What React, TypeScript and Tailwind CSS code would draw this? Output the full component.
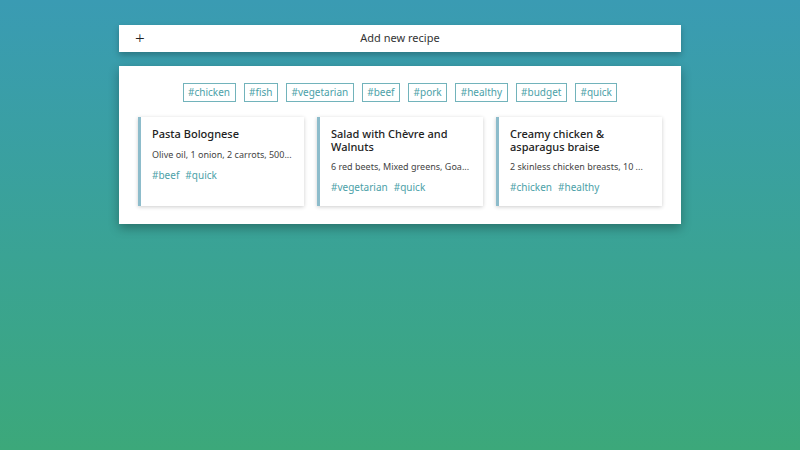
import React from 'react';

const filters = ['chicken', 'fish', 'vegetarian', 'beef', 'pork', 'healthy', 'budget', 'quick'];

const recipes = [
  { title: 'Pasta Bolognese', ingredients: 'Olive oil, 1 onion, 2 carrots, 500...', tags: ['beef', 'quick'] },
  { title: 'Salad with Chèvre and Walnuts', ingredients: '6 red beets, Mixed greens, Goa...', tags: ['vegetarian', 'quick'] },
  { title: 'Creamy chicken & asparagus braise', ingredients: '2 skinless chicken breasts, 10 ...', tags: ['chicken', 'healthy'] },
];

export default function App() {
  return (
    <div
      className="w-full h-[450px] bg-gradient-to-b from-[#3a9bb3] to-[#3ca87a] pt-[25px]"
      style={{ fontFamily: '"Noto Sans", "Open Sans", sans-serif' }}
    >
      <div className="w-[562px] mx-auto">
        <button className="w-full h-[27px] bg-white flex items-center relative shadow-[0_3px_6px_rgba(0,0,0,0.25)]">
          <span className="absolute left-[16px] top-[3px] text-[17px] leading-[20px] text-[#222] font-light">+</span>
          <span className="flex-1 text-center text-[11px] text-[#333]">Add new recipe</span>
        </button>

        <div className="mt-[14px] bg-white px-[19px] pt-[17px] pb-[18px] shadow-[0_4px_10px_rgba(0,0,0,0.3)]">
          <div className="flex justify-center gap-[8px]">
            {filters.map((f) => (
              <span
                key={f}
                className="h-[19px] px-[4.5px] flex items-center border-[1.5px] border-[#72b3bb] text-[10px] text-[#4b9fa8]"
              >
                #{f}
              </span>
            ))}
          </div>

          <div className="mt-[15px] grid grid-cols-3 gap-[13px]">
            {recipes.map((r) => (
              <div
                key={r.title}
                className="h-[89px] border-l-[3px] border-[#8dbccb] bg-white pl-[11px] pr-[12px] pt-[11px] shadow-[0_1px_4px_rgba(0,0,0,0.2)]"
              >
                <div className="text-[11px] leading-[12.5px] font-medium text-[#222]">{r.title}</div>
                <div className="mt-[8px] text-[9px] leading-[12px] text-[#444] whitespace-nowrap">{r.ingredients}</div>
                <div className="mt-[7px] flex gap-[6px] text-[10px] text-[#4b9fa8]">
                  {r.tags.map((t) => (
                    <span key={t}>#{t}</span>
                  ))}
                </div>
              </div>
            ))}
          </div>
        </div>
      </div>
    </div>
  );
}
